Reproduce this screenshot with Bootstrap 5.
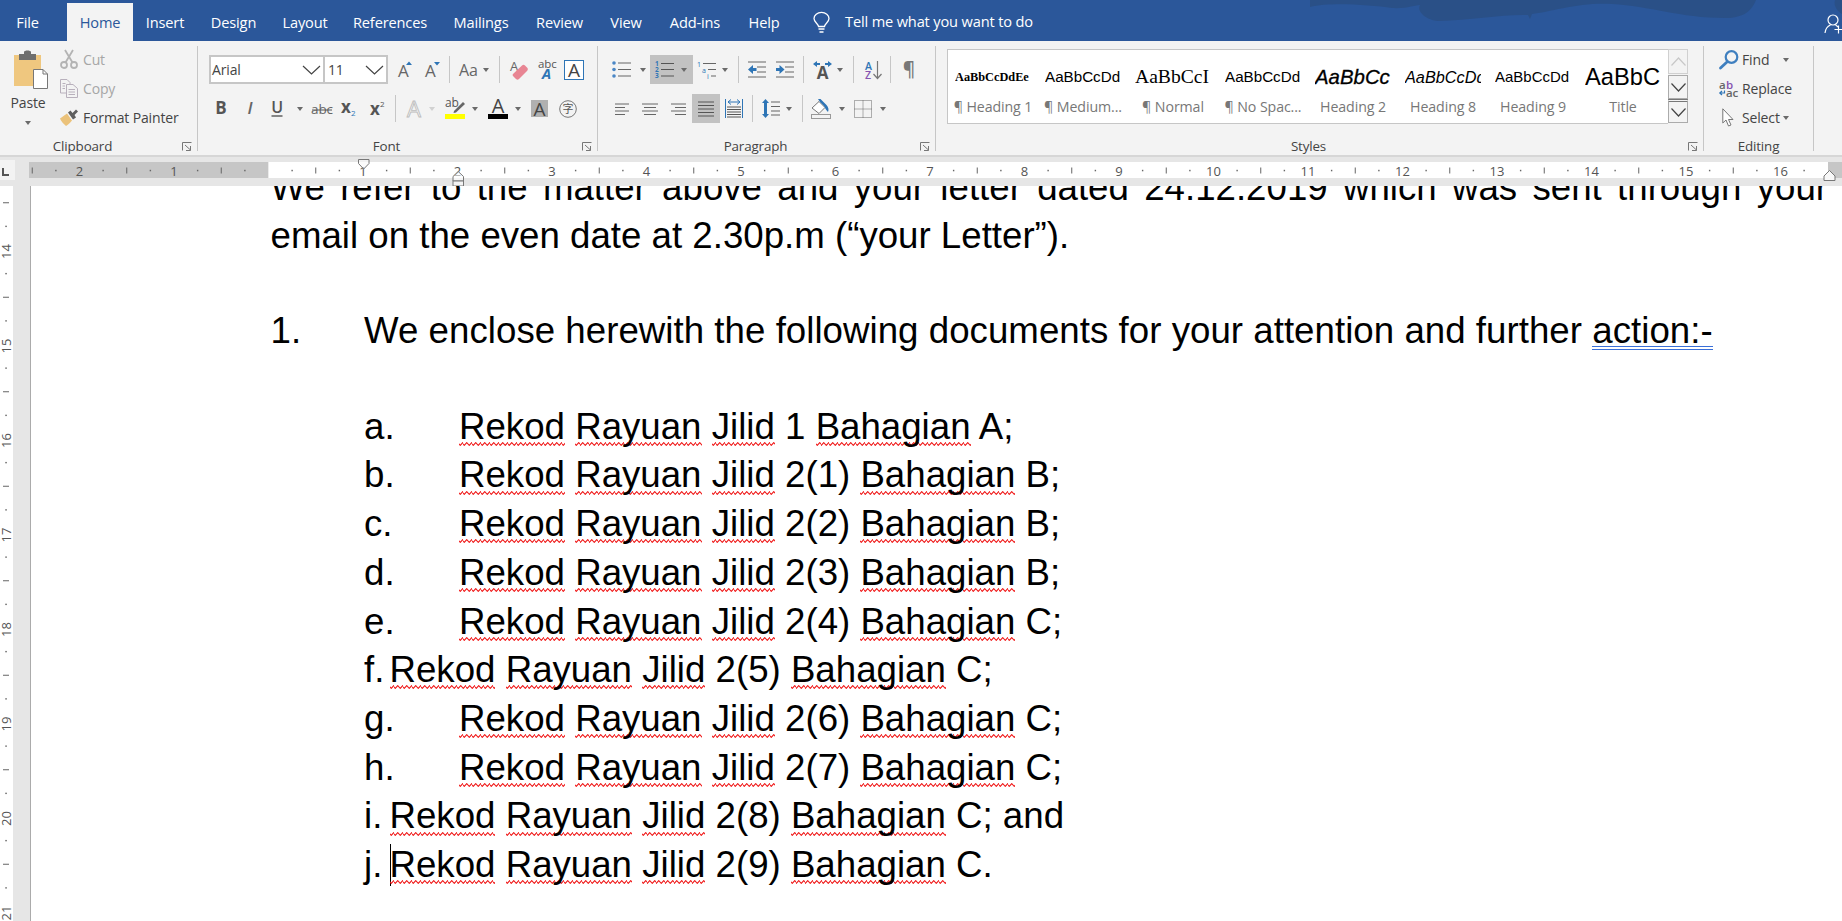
<!doctype html>
<html lang="en"><head><meta charset="utf-8"><title>Word</title>
<link href="https://cdn.jsdelivr.net/npm/bootstrap@5.3.0/dist/css/bootstrap.min.css" rel="stylesheet">
<style>
html,body{height:100%;overflow:hidden;background:#fff}
body{font-family:"Open Sans","Noto Sans",sans-serif;width:1842px;height:921px}
svg{display:block;flex:none;overflow:visible}
svg text{font-family:"Open Sans","Noto Sans",sans-serif}
svg text.wd-cjk{font-family:"Liberation Sans","Noto Sans CJK SC",sans-serif}
.g1{margin-left:1px}.g2{margin-left:2px}.g3{margin-left:3px}.g4{margin-left:4px}.g5{margin-left:5px}.g6{margin-left:6px}.g7{margin-left:7px}.g8{margin-left:8px}.g9{margin-left:9px}.g10{margin-left:10px}.g11{margin-left:11px}.g12{margin-left:12px}.g13{margin-left:13px}.g14{margin-left:14px}.g15{margin-left:15px}.g17{margin-left:17px}.g20{margin-left:20px}
.up1{margin-top:-1px}
.wd-title{height:41px;background:#2B579A;position:relative;color:#fff;font-size:14.6px;letter-spacing:-.15px;overflow:hidden}
.wd-wave{position:absolute;left:0;top:0}
.wd-tab{color:#fff;height:38px;margin-top:3px;padding:0;line-height:38px;text-align:center;position:relative}
.wd-tab:hover,.wd-tab:focus{color:#fff}
.wd-tab.active{background:#F3F3F3;color:#2B579A}
.t1{width:55px;margin-right:12px}.t2{width:66px}.t3{width:64px}.t4{width:73px}.t5{width:70px}.t6{width:100px}.t7{width:82px}.t8{width:75px}.t9{width:58px}.t10{width:80px}.t11{width:58px}
.wd-tell{position:relative;margin-top:3px;height:38px}
.wd-person{position:absolute;left:1824px;top:14px}
.wd-ribbon{height:116px;background:#F3F3F3;border-bottom:2px solid #D6D6D6;color:#444;font-size:14px;letter-spacing:-.15px}
.wd-grp{height:105px;margin-top:5px;border-right:1px solid #C6C6C6;position:relative;flex:none}
.gc{width:198px}.gf{width:400px}.gp{width:338px}.gs{width:768px}.ge{width:110px}
.wd-lbl{position:absolute;left:0;right:0;top:91px;line-height:18px;text-align:center;color:#444;font-size:13.4px;padding-right:22px}
.gc .wd-lbl{padding-right:32px}
.ge .wd-lbl{padding-right:0}
.wd-launch{position:absolute;right:5px;top:96px}
.wd-rows{padding-top:9px;flex-direction:column;gap:10px}
.wd-row{height:29px;align-items:center}
.wd-r29{height:29px;align-items:center}
.wd-paste{width:56px;flex-direction:column;align-items:center;color:#444}
.wd-paste svg:first-child{margin:4px 0 0 6px}
.wd-paste span{line-height:20px;margin-top:3px;font-size:14px}
.wd-pc{margin-top:8px}
.wd-dis{color:#A6A6A6}
.wd-box{height:29px;background:#fff;border:2px solid #C6C6C6;align-items:center;justify-content:space-between;font-size:14px;color:#444;flex:none}
.wd-fn{width:115px;padding:0 2px 0 1px;border-right-width:1px}
.wd-fs{width:64px;padding:0 2px 0 3px;border-left-width:1px}
.car{display:inline-block;flex:none;width:0;height:0;border-style:solid;border-color:#6a6a6a transparent transparent;border-width:4px 3.5px 0}
.vs{display:block;flex:none;width:1px;height:27px;background:#C6C6C6}
.hi{background:#C2C2C2;align-items:center;height:29px;flex:none}
.hn{width:43px;padding-left:5px}
.hj{width:28px;justify-content:center}
.wd-aa{width:18px;font-size:16px;color:#666;line-height:16px;flex:none;letter-spacing:0}
.wd-gal{margin:3px 0 0 11px;height:75px;width:741px}
.wd-items{width:721px;background:#fff;border:1px solid #C6C6C6;border-right:0;height:75px;padding-top:9px}
.wd-st{width:90px;flex:none;text-align:center;overflow:hidden}
.wd-pv{display:block;width:76px;margin:0 auto;height:36px;line-height:36px;overflow:hidden;white-space:nowrap;color:#000;letter-spacing:0;font-family:"Liberation Sans",sans-serif;text-align:left}
.wd-nm{display:block;line-height:20px;margin-top:2px;color:#777;font-size:14.2px;white-space:nowrap;letter-spacing:-.1px}
.p1{font-family:"Liberation Serif",serif;font-weight:700;font-size:12.3px}
.p2{font-size:15.2px}
.p3{font-family:"Liberation Serif",serif;font-size:19.6px}
.p5{font-style:italic;font-size:20.4px;-webkit-text-stroke:.3px #000}
.p6{font-style:italic;font-size:16.3px}
.p7{font-size:15px}
.p8{font-size:23.7px}
.wd-scr{width:20px;flex-direction:column}
.wd-scr span{display:flex;align-items:center;justify-content:center;border:1px solid #ABABAB;background:#F3F3F3}
.s1{height:25px;border-color:#D0D0D0!important}
.s2{height:24px;margin-top:1px}
.s3{height:24px;margin-top:0;border-top:3px double #777!important}
.wd-ed{padding-left:15px;flex-direction:column}
.wd-band{height:29px;background:#E6E6E6}
.wd-body{height:735px;overflow:hidden}
.wd-page{flex:1;overflow:hidden;background:#fff;padding:0 14px 0 239.5px;font-family:"Liberation Sans",Arial,sans-serif;font-size:36.67px;line-height:48.38px;color:#000}
.wd-flow{margin-top:-22.2px}
.wd-just{text-align:justify;margin:0}
.wd-b1{height:46.4px}
.wd-b2{height:47.4px}
.wd-num{width:93.5px;flex:none}
.wd-wide{letter-spacing:.03px}
.wd-li{padding-left:93.5px;line-height:48.7px}
.wd-ab{width:95px;flex:none}
.wd-sh{width:25.5px;flex:none}
.sp{background:url("data:image/svg+xml,%3Csvg xmlns='http://www.w3.org/2000/svg' width='4.5' height='4'%3E%3Cpath d='M-1.125 .6L1.125 3.4L3.375 .6L5.625 3.4' fill='none' stroke='%23F01818' stroke-width='1'/%3E%3C/svg%3E") repeat-x 0 calc(100% - .8px)/4.5px 4px}
.gm{background:linear-gradient(#3A6FD8,#3A6FD8) 0 calc(100% - 3.5px)/100% 1px no-repeat,linear-gradient(#3A6FD8,#3A6FD8) 0 calc(100% - .6px)/100% 1px no-repeat}
.wd-caret{display:inline-block;width:1px;height:42px;background:#000;margin-right:-1px;vertical-align:-9px}
</style></head>
<body>
<div class="wd-title d-flex">
  <svg class="wd-wave" width="1842" height="41" viewBox="0 0 1842 41"><path fill="#2A5087" d="M1310 0V7C1330 2 1370 5 1392 8C1405 9 1416 5 1420 5C1416 12 1428 21 1440 21C1470 20 1505 14 1528 15L1530 19L1532 14C1550 12 1580 2 1612 4C1650 6 1680 18 1725 18C1745 18 1752 10 1756 0Z"/><path fill="#2A5087" d="M1842 0H1835C1833 6 1838 12 1842 14Z"/></svg>
  <nav class="nav flex-nowrap">
    <a class="nav-link wd-tab t1" href="#">File</a>
    <a class="nav-link wd-tab t2 active" href="#">Home</a>
    <a class="nav-link wd-tab t3" href="#">Insert</a>
    <a class="nav-link wd-tab t4" href="#">Design</a>
    <a class="nav-link wd-tab t5" href="#">Layout</a>
    <a class="nav-link wd-tab t6" href="#">References</a>
    <a class="nav-link wd-tab t7" href="#">Mailings</a>
    <a class="nav-link wd-tab t8" href="#">Review</a>
    <a class="nav-link wd-tab t9" href="#">View</a>
    <a class="nav-link wd-tab t10" href="#">Add-ins</a>
    <a class="nav-link wd-tab t11" href="#">Help</a>
  </nav>
  <div class="wd-tell d-flex align-items-center">
    <svg class="g20" width="17" height="21" viewBox="0 0 17 21" fill="none" stroke="#fff" stroke-width="1.3"><path d="M5.5 14.5C5 11.5 1 10 1 6.5A7.3 6 0 0 1 16 6.5C16 10 12 11.500 11.500 14.500Z"/><path d="M5.500 17H11.500M6.500 20H10.500"/></svg>
    <span class="g15">Tell me what you want to do</span>
  </div>
  <svg class="wd-person" width="18" height="20" viewBox="0 0 18 20" fill="none" stroke="#fff" stroke-width="1.200"><circle cx="9" cy="6" r="5"/><path d="M1 19C1.500 14 4 12 6.500 11M11.500 11C12.500 11.500 13 12 14 13"/><path d="M10.500 15.500H18M14.500 11.500V19.500"/></svg>
</div>

<div class="wd-ribbon d-flex">
  <section class="wd-grp gc d-flex">
    <div class="wd-paste d-flex">
      <svg width="36" height="40" viewBox="0 0 36 40"><rect x="1" y="5" width="27" height="31" fill="#EFC77F"/><path fill="#6E6E6E" d="M6 4H11V2C11 0 18 0 18 2V4H23V10H6Z"/><path fill="#fff" stroke="#777" d="M20.500 19.500H30L34.500 24V38.500H20.500Z"/><path fill="none" stroke="#777" d="M30 19.500V24H34.500"/></svg>
      <span>Paste</span>
      <i class="car wd-pc"></i>
    </div>
    <div class="d-flex flex-column g4 up1">
      <div class="d-flex wd-r29 wd-dis"><svg width="18" height="19" viewBox="0 0 18 19" fill="none" stroke="#B4B4B4" stroke-width="1.800"><circle cx="4" cy="15" r="3"/><circle cx="14" cy="15" r="3"/><path d="M5.500 12.500L13 0M12.500 12.500L5 0"/></svg><span class="g5">Cut</span></div>
      <div class="d-flex wd-r29 wd-dis"><svg width="18" height="19" viewBox="0 0 18 19" fill="#F3F3F3" stroke="#B8B0BC"><path d="M.5.500H7L10 3.500V14H.5Z"/><path d="M6.500 5.500H13L17.500 9.500V18.500H6.500Z"/><path d="M2.500 4.500H5.500M2.500 7H5M2.500 9.500H5M8.500 10.500H15M8.500 13H15M8.500 15.500H15" fill="none"/></svg><span class="g5">Copy</span></div>
      <div class="d-flex wd-r29"><svg width="18" height="17" viewBox="0 0 18 17"><path fill="#EBC27A" d="M0 9.500L7 4.500L12 11.500C10 14 8 16 6 17C3.500 15 1 12 0 9.500Z"/><path fill="#5E5E5E" d="M8 3.500L10.500 1.500L12.500 4L16 .5L18 2.500L14.500 6L16 8.500L13 10.500Z"/></svg><span class="g5">Format Painter</span></div>
    </div>
    <span class="wd-lbl">Clipboard</span>
    <svg class="wd-launch" width="10" height="9" viewBox="0 0 10 9" fill="none" stroke="#777"><path d="M.5 8.500V.5H9.500M3 3L8.500 8M8.500 4V8.500H4"/></svg>
  </section>

  <section class="wd-grp gf">
    <div class="wd-rows d-flex">
      <div class="d-flex wd-row">
        <div class="wd-box wd-fn d-flex g11"><span>Arial</span><svg width="19" height="10" viewBox="0 0 19 10" fill="none" stroke="#444" stroke-width="1.200"><path d="M1 1L9.500 9L18 1"/></svg></div>
        <div class="wd-box wd-fs d-flex"><span>11</span><svg width="19" height="10" viewBox="0 0 19 10" fill="none" stroke="#444" stroke-width="1.200"><path d="M1 1L9.500 9L18 1"/></svg></div>
        <svg class="g10" width="15" height="17" viewBox="0 0 15 17"><text x="0" y="16" font-size="17" fill="#666">A</text><path d="M8 4L11 .5L14 4Z" fill="#2E75B6"/></svg>
        <svg class="g12" width="16" height="17" viewBox="0 0 16 17"><text x="0" y="16" font-size="17" fill="#666">A</text><path d="M9 1H15L12 4.500Z" fill="#2E75B6"/></svg>
        <i class="vs g8"></i>
        <span class="wd-aa g9">Aa</span><i class="car g6"></i>
        <i class="vs g10"></i>
        <svg class="g10" width="18" height="20" viewBox="0 0 18 20"><text x="0" y="11" font-size="13" fill="#666">A</text><path d="M3 14L12 5.500C13 4.500 14 4.500 15 5.500L17.500 8C18 9 18 10 17 11L9 19C8 20 7 20 6 19L3 16C2.500 15.500 2.500 14.500 3 14Z" fill="#E88593"/></svg>
        <svg class="g10" width="16" height="19" viewBox="0 0 16 19"><text x="0" y="8" font-size="11.500" fill="#555">abc</text><text x="4" y="18.500" font-size="14.500" font-weight="700" font-style="italic" fill="#2E75B6">A</text></svg>
        <svg class="g10" width="20" height="20" viewBox="0 0 20 20"><rect x=".5" y=".5" width="19" height="19" fill="#fff" stroke="#2E75B6"/><text x="10" y="16.500" font-size="19" fill="#444" text-anchor="middle">A</text></svg>
      </div>
      <div class="d-flex wd-row">
        <svg class="g17" width="12" height="17" viewBox="0 0 12 17"><text x="6" y="14" font-size="17" font-weight="700" fill="#555" text-anchor="middle">B</text></svg>
        <svg class="g17" width="12" height="17" viewBox="0 0 12 17"><text x="6" y="14" font-size="17" font-weight="600" font-style="italic" fill="#666" text-anchor="middle">I</text></svg>
        <svg class="g15" width="12" height="17" viewBox="0 0 12 17"><text x="6" y="13" font-size="16" font-weight="600" fill="#555" text-anchor="middle">U</text><path d="M.5 16H11.500" stroke="#555" stroke-width="1.400"/></svg>
        <i class="car g14"></i>
        <svg class="g9" width="20" height="16" viewBox="0 0 20 16"><text x="10" y="12.500" font-size="13.500" fill="#666" text-anchor="middle">abc</text><path d="M0 9H20" stroke="#555"/></svg>
        <svg class="g9" width="15" height="17" viewBox="0 0 15 17"><text x="0" y="12.500" font-size="17" font-weight="700" fill="#555">x</text><text x="10" y="16" font-size="8" fill="#2E75B6">2</text></svg>
        <svg class="g14" width="15" height="17" viewBox="0 0 15 17"><text x="0" y="14.500" font-size="17" font-weight="700" fill="#555">x</text><text x="10" y="7" font-size="8" fill="#555">2</text></svg>
        <i class="vs g10"></i>
        <svg class="g8" width="20" height="20" viewBox="0 0 20 20"><text x="10" y="18" font-size="22" fill="#FAFAFA" stroke="#BDBDBD" stroke-width=".9" text-anchor="middle">A</text></svg>
        <i class="car g5 opacity-25"></i>
        <svg class="g10" width="20" height="21" viewBox="0 0 20 21"><text x="0" y="9" font-size="12" fill="#555">ab</text><path d="M9 13L18 4L20 6L11 14.500L8.500 15Z" fill="#666"/><rect x="0" y="16" width="20" height="5" fill="#FFFF00"/></svg>
        <i class="car g7"></i>
        <svg class="g10" width="20" height="21" viewBox="0 0 20 21"><text x="10" y="15" font-size="20" fill="#444" text-anchor="middle">A</text><rect x="0" y="16" width="20" height="5" fill="#000"/></svg>
        <i class="car g7"></i>
        <svg class="g10" width="17" height="17" viewBox="0 0 17 17"><rect width="17" height="17" fill="#B0B0B0"/><text x="8.500" y="15.500" font-size="19" fill="#444" text-anchor="middle">A</text></svg>
        <svg class="g11" width="18" height="18" viewBox="0 0 18 18"><circle cx="9" cy="9" r="8.300" fill="none" stroke="#777"/><text class="wd-cjk" x="9" y="13" font-size="11" fill="#555" text-anchor="middle">字</text></svg>
      </div>
    </div>
    <span class="wd-lbl">Font</span>
    <svg class="wd-launch" width="10" height="9" viewBox="0 0 10 9" fill="none" stroke="#777"><path d="M.5 8.500V.5H9.500M3 3L8.500 8M8.500 4V8.500H4"/></svg>
  </section>

  <section class="wd-grp gp">
    <div class="wd-rows d-flex">
      <div class="d-flex wd-row">
        <svg class="g14" width="19" height="17" viewBox="0 0 19 17"><g fill="#4A86C5"><circle cx="2" cy="2" r="1.800"/><circle cx="2" cy="8.500" r="1.800"/><circle cx="2" cy="15" r="1.800"/></g><path d="M6 2H19M6 8.500H19M6 15H19" stroke="#666" stroke-width="1.200"/></svg>
        <i class="car g9"></i>
        <div class="hi hn d-flex g4"><svg width="19" height="17" viewBox="0 0 19 17"><g font-size="6.500" font-weight="700" fill="#2E75B6"><text x="0" y="5">1</text><text x="0" y="11">2</text><text x="0" y="17">3</text></g><path d="M6 2.500H19M6 8.500H19M6 15H19" stroke="#555" stroke-width="1.200"/></svg><i class="car g7"></i></div>
        <svg class="g4" width="19" height="18" viewBox="0 0 19 18"><g font-size="7" fill="#2E75B6"><text x="0" y="6">1</text><text x="5" y="12">a</text><text x="10" y="18">i</text></g><path d="M6 2.500H19M11 8.500H19M14 15H19" stroke="#666" stroke-width="1.200"/></svg>
        <i class="car g6"></i>
        <i class="vs g10"></i>
        <svg class="g9" width="18" height="17" viewBox="0 0 18 17"><path d="M0 1H18M9 6H18M9 11H18M0 16H18" stroke="#666" stroke-width="1.200"/><path d="M0 8.500L5 4V7H8.500V10H5V13Z" fill="#2E75B6"/></svg>
        <svg class="g10" width="18" height="17" viewBox="0 0 18 17"><path d="M0 1H18M9 6H18M9 11H18M0 16H18" stroke="#666" stroke-width="1.200"/><path d="M8.500 8.500L3.500 4V7H0V10H3.500V13Z" fill="#2E75B6"/></svg>
        <i class="vs g9"></i>
        <svg class="g9" width="19" height="18" viewBox="0 0 19 18"><text x="9.500" y="18" font-size="17" font-weight="700" fill="#555" text-anchor="middle">A</text><path d="M0 3L4 0V2H7V4H4V6ZM19 3L15 0V2H12V4H15V6Z" fill="#2E75B6"/></svg>
        <i class="car g5"></i>
        <i class="vs g10"></i>
        <svg class="g11" width="17" height="18" viewBox="0 0 17 18"><text x="0" y="8.500" font-size="10.500" font-weight="600" fill="#2E75B6">A</text><text x="0" y="18" font-size="10.500" font-weight="600" fill="#8654B0">Z</text><path d="M12.500 0V17M8.500 13L12.500 17.500L16.500 13" fill="none" stroke="#777" stroke-width="1.200"/></svg>
        <i class="vs g8"></i>
        <svg class="g12" width="12" height="18" viewBox="0 0 12 18"><text x="6" y="15" font-size="19" font-weight="600" fill="#777" text-anchor="middle">¶</text></svg>
      </div>
      <div class="d-flex wd-row">
        <svg class="g17" width="14" height="12" viewBox="0 0 14 12"><path d="M0 1H14M0 4.500H10M0 8H14M0 11.500H10" stroke="#666"/></svg>
        <svg class="g13" width="16" height="12" viewBox="0 0 16 12"><path d="M0 1H16M2 4.500H14M0 8H16M2 11.500H14" stroke="#666"/></svg>
        <svg class="g13" width="15" height="12" viewBox="0 0 15 12"><path d="M0 1H15M4 4.500H15M0 8H15M4 11.500H15" stroke="#666"/></svg>
        <div class="hi hj d-flex g6"><svg width="16" height="16" viewBox="0 0 16 16"><path d="M0 1H16M0 4.500H16M0 8H16M0 11.500H16M0 15H16" stroke="#555"/></svg></div>
        <svg class="g5" width="18" height="19" viewBox="0 0 18 19"><path d="M.5 0V19M17.500 0V19" stroke="#2E75B6"/><path d="M3 3H15M3 3L6 .5M3 3L6 5.500M15 3L12 .5M15 3L12 5.500" fill="none" stroke="#2E75B6"/><path d="M2 8H16M2 10.500H16M2 13H16M2 15.500H16M2 18H16" stroke="#555"/></svg>
        <i class="vs g9"></i>
        <svg class="g9" width="18" height="19" viewBox="0 0 18 19"><path d="M3.500 0L7 4H5V15H7L3.500 19L0 15H2V4H0Z" fill="#2E75B6"/><path d="M9 3H18M9 7.500H18M9 12H18M9 16H18" stroke="#666" stroke-width="1.200"/></svg>
        <i class="car g6"></i>
        <i class="vs g10"></i>
        <svg class="g8" width="20" height="20" viewBox="0 0 20 20"><path d="M1 9L8 2.500L14 8.500L8 14.500Z" fill="#fff" stroke="#777"/><path d="M7 0H9.500L15.500 6C17.500 8 18 11 17 13C15 11 14 9 13 7L9 3Z" fill="#2E75B6"/><rect x=".5" y="15.500" width="19" height="4" fill="#F3F3F3" stroke="#999"/></svg>
        <i class="car g8"></i>
        <svg class="g9" width="18" height="18" viewBox="0 0 18 18" fill="none" stroke="#666" stroke-dasharray="1 1"><rect x=".5" y=".5" width="17" height="17"/><path d="M9 .5V17.500M.5 9H17.500"/></svg>
        <i class="car g8"></i>
      </div>
    </div>
    <span class="wd-lbl">Paragraph</span>
    <svg class="wd-launch" width="10" height="9" viewBox="0 0 10 9" fill="none" stroke="#777"><path d="M.5 8.500V.5H9.500M3 3L8.500 8M8.500 4V8.500H4"/></svg>
  </section>

  <section class="wd-grp gs">
    <div class="wd-gal d-flex">
      <div class="wd-items d-flex">
        <div class="wd-st"><span class="wd-pv p1">AaBbCcDdEe</span><span class="wd-nm">¶ Heading 1</span></div>
        <div class="wd-st"><span class="wd-pv p2">AaBbCcDd</span><span class="wd-nm">¶ Medium...</span></div>
        <div class="wd-st"><span class="wd-pv p3">AaBbCcI</span><span class="wd-nm">¶ Normal</span></div>
        <div class="wd-st"><span class="wd-pv p2">AaBbCcDd</span><span class="wd-nm">¶ No Spac...</span></div>
        <div class="wd-st"><span class="wd-pv p5">AaBbCc</span><span class="wd-nm">Heading 2</span></div>
        <div class="wd-st"><span class="wd-pv p6">AaBbCcDd</span><span class="wd-nm">Heading 8</span></div>
        <div class="wd-st"><span class="wd-pv p7">AaBbCcDd</span><span class="wd-nm">Heading 9</span></div>
        <div class="wd-st"><span class="wd-pv p8">AaBbC</span><span class="wd-nm">Title</span></div>
      </div>
      <div class="wd-scr d-flex">
        <span class="s1"><svg width="15" height="9" viewBox="0 0 15 9" fill="none" stroke="#C8C8C8" stroke-width="1.200"><path d="M.5 8.500L7.500 1L14.500 8.500"/></svg></span>
        <span class="s2"><svg width="15" height="9" viewBox="0 0 15 9" fill="none" stroke="#444" stroke-width="1.200"><path d="M.5.500L7.500 8L14.500.5"/></svg></span>
        <span class="s3"><svg width="15" height="9" viewBox="0 0 15 9" fill="none" stroke="#444" stroke-width="1.200"><path d="M.5.500L7.500 8L14.500.5"/></svg></span>
      </div>
    </div>
    <span class="wd-lbl">Styles</span>
    <svg class="wd-launch" width="10" height="9" viewBox="0 0 10 9" fill="none" stroke="#777"><path d="M.5 8.500V.5H9.500M3 3L8.500 8M8.500 4V8.500H4"/></svg>
  </section>

  <section class="wd-grp ge d-flex wd-ed">
    <div class="d-flex wd-r29 up1"><svg width="20" height="19" viewBox="0 0 20 19" fill="none"><circle cx="12.500" cy="7" r="5.800" stroke="#3F7FBF" stroke-width="2.200"/><path d="M8 12L1.500 18" stroke="#3F7FBF" stroke-width="2.800" stroke-linecap="round"/></svg><span class="g3">Find</span><i class="car g14"></i></div>
    <div class="d-flex wd-r29"><svg width="20" height="17" viewBox="0 0 20 17"><text x="0" y="9" font-size="11.500" font-weight="600" fill="#666">a</text><text x="7" y="9" font-size="11.500" font-weight="600" fill="#8654B0">b</text><path d="M5.500 10.500V13H1M3 11L.8 13L3 15" fill="none" stroke="#2E75B6" stroke-width="1.200"/><text x="7" y="16.500" font-size="11.500" font-weight="600" fill="#666">ac</text></svg><span class="g3">Replace</span></div>
    <div class="d-flex wd-r29"><svg class="g3" width="12" height="19" viewBox="0 0 12 19" fill="#fff" stroke="#777"><path d="M.8.8V15L4 12L6.500 18L9 17L6.500 11.500H11Z"/></svg><span class="g8">Select</span><i class="car g3"></i></div>
    <span class="wd-lbl">Editing</span>
  </section>
</div>

<div class="wd-band"><svg id="hr" width="1842" height="29" viewBox="0 0 1842 29"></svg></div>

<div class="wd-body d-flex">
  <svg id="vr" width="31" height="735" viewBox="0 0 31 735"></svg>
  <main class="wd-page">
    <div class="wd-flow">
      <p class="wd-just">We refer to the matter above and your letter dated 24.12.2019 which was sent through your email on the even date at 2.30p.m (“your Letter”).</p>
      <div class="wd-b1"></div>
      <div class="d-flex"><span class="wd-num">1.</span><span class="wd-wide">We enclose herewith the following documents for your attention and further <span class="gm">action:-</span></span></div>
      <div class="wd-b2"></div>
      <div class="wd-li">
        <div class="d-flex"><span class="wd-ab">a.</span><span><span class="sp">Rekod</span> <span class="sp">Rayuan</span> <span class="sp">Jilid</span> 1 <span class="sp">Bahagian</span> A;</span></div>
        <div class="d-flex"><span class="wd-ab">b.</span><span><span class="sp">Rekod</span> <span class="sp">Rayuan</span> <span class="sp">Jilid</span> 2(1) <span class="sp">Bahagian</span> B;</span></div>
        <div class="d-flex"><span class="wd-ab">c.</span><span><span class="sp">Rekod</span> <span class="sp">Rayuan</span> <span class="sp">Jilid</span> 2(2) <span class="sp">Bahagian</span> B;</span></div>
        <div class="d-flex"><span class="wd-ab">d.</span><span><span class="sp">Rekod</span> <span class="sp">Rayuan</span> <span class="sp">Jilid</span> 2(3) <span class="sp">Bahagian</span> B;</span></div>
        <div class="d-flex"><span class="wd-ab">e.</span><span><span class="sp">Rekod</span> <span class="sp">Rayuan</span> <span class="sp">Jilid</span> 2(4) <span class="sp">Bahagian</span> C;</span></div>
        <div class="d-flex"><span class="wd-sh">f.</span><span><span class="sp">Rekod</span> <span class="sp">Rayuan</span> <span class="sp">Jilid</span> 2(5) <span class="sp">Bahagian</span> C;</span></div>
        <div class="d-flex"><span class="wd-ab">g.</span><span><span class="sp">Rekod</span> <span class="sp">Rayuan</span> <span class="sp">Jilid</span> 2(6) <span class="sp">Bahagian</span> C;</span></div>
        <div class="d-flex"><span class="wd-ab">h.</span><span><span class="sp">Rekod</span> <span class="sp">Rayuan</span> <span class="sp">Jilid</span> 2(7) <span class="sp">Bahagian</span> C;</span></div>
        <div class="d-flex"><span class="wd-sh">i.</span><span><span class="sp">Rekod</span> <span class="sp">Rayuan</span> <span class="sp">Jilid</span> 2(8) <span class="sp">Bahagian</span> C; and</span></div>
        <div class="d-flex"><span class="wd-sh">j.</span><span><span class="wd-caret"></span><span class="sp">Rekod</span> <span class="sp">Rayuan</span> <span class="sp">Jilid</span> 2(9) <span class="sp">Bahagian</span> C.</span></div>
      </div>
    </div>
  </main>
</div>

<script>
(function(){
  var x0=268.5,cm=94.5,h='';
  h+='<rect x="0" y="3" width="15" height="20" fill="#F3F3F3"/><path d="M3 11V18H9" fill="none" stroke="#555" stroke-width="2"/>';
  h+='<rect x="29" y="5" width="239.5" height="16" fill="#C6C6C6"/><rect x="268.5" y="5" width="1559.5" height="16" fill="#fff"/><rect x="1828" y="5" width="14" height="16" fill="#C6C6C6"/>';
  for(var k=-3;k<=17;k++){
    var x=x0+cm*k;
    if(k!==0&&x>29&&x<1828) h+='<text x="'+x+'" y="18.500" font-size="13" fill="#555" text-anchor="middle">'+Math.abs(k)+'</text>';
    [[.25,0],[.5,1],[.75,0]].forEach(function(t){
      var tx=x+cm*t[0]; if(tx<30||tx>1827) return;
      h+= t[1]?'<rect x="'+(tx-.5)+'" y="10.500" width="1" height="6" fill="#666"/>':'<rect x="'+(tx-.7)+'" y="12.800" width="1.400" height="1.500" fill="#666"/>';
    });
  }
  h+='<path d="M358.500 2.500H369V6.500L363.700 12L358.500 6.500Z" fill="#F8F8F8" fill-opacity=".6" stroke="#777"/>';
  h+='<path d="M453 24V19.500L458.200 14.500L463.500 19.500V24Z" fill="#fff" fill-opacity=".6" stroke="#777"/><rect x="453" y="24" width="10.500" height="5" fill="#F3F3F3" stroke="#777"/>';
  h+='<path d="M1824 23.500V19L1829.500 13.500L1835 19V23.500Z" fill="#F8F8F8" stroke="#777"/>';
  document.getElementById('hr').innerHTML=h;
  var v='<rect width="13" height="735" fill="#fff"/><rect x="13" width="17" height="735" fill="#E6E6E6"/><rect x="30" width="1" height="735" fill="#ABABAB"/>';
  for(var c=13;c<=21;c++){
    var y=250+94.5*(c-14)-186;
    if(y>-5&&y<740) v+='<text transform="translate(10.500 '+(y+1.5)+') rotate(-90)" font-size="13" fill="#555" text-anchor="middle">'+c+'</text>';
    [[.25,0],[.5,1],[.75,0]].forEach(function(t){
      var ty=y+94.5*t[0]; if(ty<2||ty>735) return;
      v+= t[1]?'<rect x="3" y="'+(ty-.5)+'" width="6" height="1" fill="#666"/>':'<rect x="5.300" y="'+(ty-.7)+'" width="1.500" height="1.400" fill="#666"/>';
    });
  }
  document.getElementById('vr').innerHTML=v;
})();
</script>
<script src="https://cdn.jsdelivr.net/npm/bootstrap@5.3.0/dist/js/bootstrap.bundle.min.js"></script>
</body></html>
